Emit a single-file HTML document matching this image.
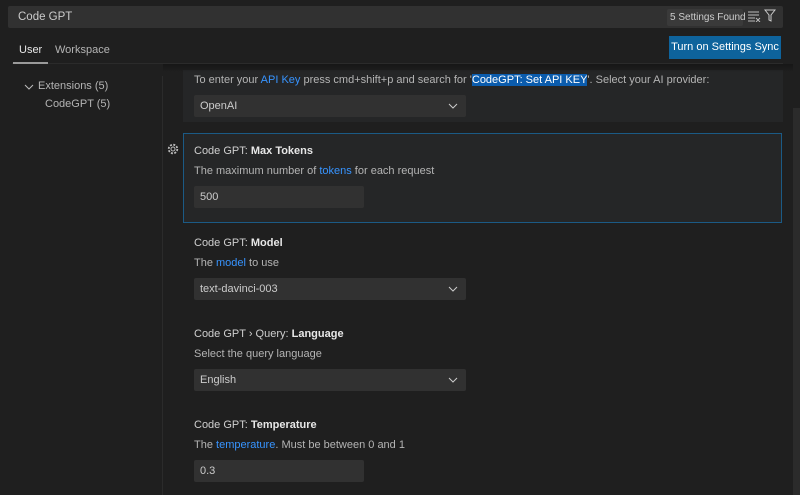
<!DOCTYPE html>
<html><head><style>
*{margin:0;padding:0;box-sizing:border-box}
body{width:800px;height:495px;background:#1f1f1f;font-family:"Liberation Sans",sans-serif;color:#cccccc;font-size:11px;position:relative;overflow:hidden}
.abs{position:absolute}
.search{left:8px;top:6px;width:775px;height:22px;background:#313131;border-radius:2px}
.lnk{color:#3794ff}
.t{white-space:nowrap}
.sel,.inp{position:absolute;left:194px;width:272px;height:22px;background:#313131;border-radius:2px;color:#ccc;padding:5px 6px}
.inp{width:170px}
.chev{position:absolute;right:8px;top:6px}
.h{position:absolute;left:194px;color:#cfcfcf}
.h b{color:#e7e7e7}
.d{position:absolute;left:194px;color:#b4b4b4}
</style></head><body>
<div class="abs search"></div>
<div class="abs t" style="left:18px;top:11px;color:#ccc;font-size:11.5px">Code GPT</div>
<div class="abs t" style="left:667px;top:9px;height:17px;width:76px;background:#3a3a3a;border-radius:2px;font-size:10px;padding:3px 3px">5 Settings Found</div>
<svg class="abs" style="left:747px;top:10px" width="14" height="12"><path d="M1 2h11M1 5h11M1 8h7M1 11h7M9 8l4 4M13 8l-4 4" stroke="#bbb" stroke-width="1" fill="none"/></svg>
<svg class="abs" style="left:764px;top:9px" width="12" height="14"><path d="M1 1h10L7 6v6L5 11V6z" stroke="#ccc" stroke-width="1" fill="none"/></svg>
<div class="abs t" style="left:19px;top:44px;color:#e7e7e7">User</div>
<div class="abs t" style="left:55px;top:44px;color:#b4b4b4">Workspace</div>
<div class="abs" style="left:12px;top:63px;width:771px;height:1px;background:#2b2b2b"></div>
<div class="abs" style="left:13px;top:62px;width:35px;height:2px;background:#9a9a9a"></div>
<div class="abs t" style="left:669px;top:36px;width:112px;height:23px;background:#0e639c;color:#fff;padding:5px 0;text-align:center;font-size:11px">Turn on Settings Sync</div>
<svg class="abs" style="left:24px;top:83px" width="10" height="8"><path d="M1 2l4 4 4-4" stroke="#bbb" fill="none"/></svg>
<div class="abs t" style="left:38px;top:80px;color:#b4b4b4">Extensions (5)</div>
<div class="abs t" style="left:45px;top:98px;color:#b4b4b4">CodeGPT (5)</div>
<div class="abs" style="left:162px;top:76px;width:1px;height:419px;background:#2b2b2b"></div>
<div class="abs" style="left:183px;top:70px;width:600px;height:52px;background:#252627"></div>
<div class="abs" style="left:163px;top:64px;width:630px;height:8px;background:linear-gradient(#161616,#1f1f1f00)"></div>
<div class="abs" style="left:793px;top:108px;width:7px;height:387px;background:#2b2b2b"></div>
<div class="abs t" style="left:194px;top:74px;color:#b4b4b4">To enter your <span class="lnk">API Key</span> press cmd+shift+p and search for '<span style="background:#0b5cad;color:#fff">CodeGPT: Set API KEY</span>'. Select your AI provider:</div>
<div class="sel" style="top:95px">OpenAI<svg class="chev" width="10" height="10"><path d="M1 3l4 4 4-4" stroke="#ccc" fill="none"/></svg></div>
<div class="abs" style="left:183px;top:133px;width:599px;height:90px;background:#252627;border:1px solid #1b5a85"></div>
<svg class="abs" style="left:167px;top:143px" width="12" height="12" viewBox="0 0 12 12"><circle cx="6" cy="6" r="2" stroke="#bbb" fill="none"/><circle cx="6" cy="6" r="4.3" stroke="#bbb" stroke-dasharray="2 1.4" stroke-width="1.8" fill="none"/></svg>
<div class="h t" style="top:145px">Code GPT: <b>Max Tokens</b></div>
<div class="d t" style="top:165px">The maximum number of <span class="lnk">tokens</span> for each request</div>
<div class="inp" style="top:186px">500</div>
<div class="h t" style="top:237px">Code GPT: <b>Model</b></div>
<div class="d t" style="top:257px">The <span class="lnk">model</span> to use</div>
<div class="sel" style="top:278px">text-davinci-003<svg class="chev" width="10" height="10"><path d="M1 3l4 4 4-4" stroke="#ccc" fill="none"/></svg></div>
<div class="h t" style="top:328px">Code GPT › Query: <b>Language</b></div>
<div class="d t" style="top:348px">Select the query language</div>
<div class="sel" style="top:369px">English<svg class="chev" width="10" height="10"><path d="M1 3l4 4 4-4" stroke="#ccc" fill="none"/></svg></div>
<div class="h t" style="top:419px">Code GPT: <b>Temperature</b></div>
<div class="d t" style="top:439px">The <span class="lnk">temperature</span>. Must be between 0 and 1</div>
<div class="inp" style="top:460px">0.3</div>
</body></html>
